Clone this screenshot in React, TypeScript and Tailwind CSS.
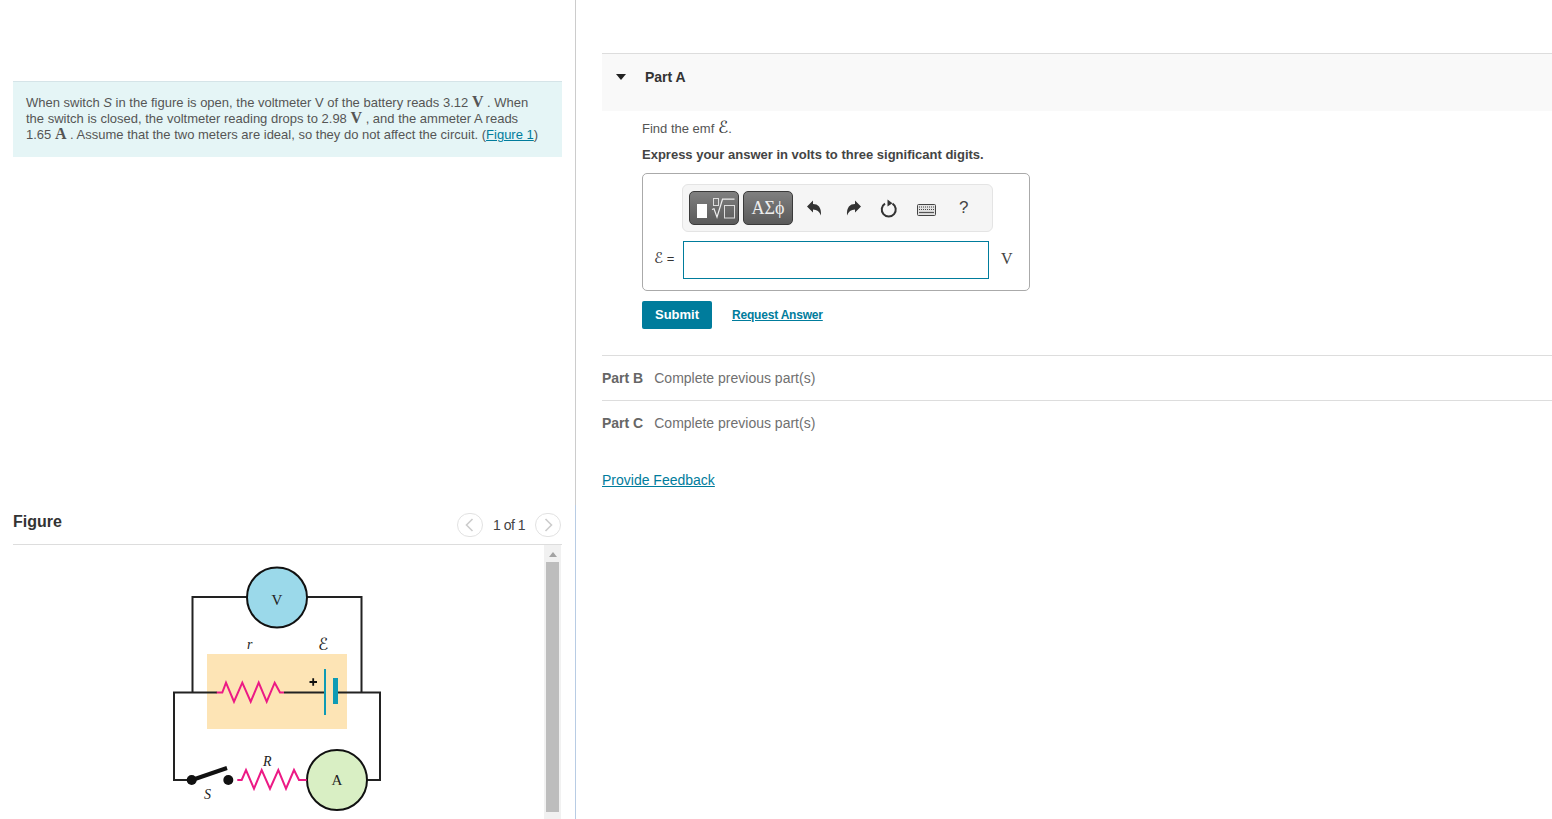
const serif = "font-['Liberation_Serif',serif]";
const script = "font-['DejaVu_Sans',sans-serif] italic";

// Circuit drawing, viewBox uses page coordinates so it's easy to compare with the figure
const Circuit = () => (
  <svg width="250" height="269" viewBox="150 550 250 269" className="block">
    <rect x="207" y="654" width="140" height="75" fill="#fde4b5" />
    <path d="M192.5 692.5V597H361.5V692.5" fill="none" stroke="#222" strokeWidth="2" />
    <path d="M217 692.5H174V780H192M284 692.5H325M338 692.5H380V780H367" fill="none" stroke="#222" strokeWidth="2" />
    <circle cx="277" cy="597.5" r="30" fill="#9bd9ea" stroke="#111" strokeWidth="2" />
    <circle cx="337" cy="780" r="30" fill="#d9efc4" stroke="#111" strokeWidth="2" />
    <polyline
      points="216.7,692.5 222.3,692.5 226,682.7 234,701.7 242.3,682.7 250.7,701.7 258.7,682.7 266.7,701.7 274.7,682.7 280,692.5 284,692.5"
      fill="none"
      stroke="#ec1a85"
      strokeWidth="2"
    />
    <polyline
      points="237.3,780 241.7,780 246,770 254,788.7 261.7,770 270,788.7 278.3,770 286,788.7 294,770 299,780 306.7,780"
      fill="none"
      stroke="#ec1a85"
      strokeWidth="2"
    />
    <rect x="324" y="669" width="2" height="46" fill="#0f9bb5" />
    <rect x="333" y="678" width="5" height="26" fill="#0f9bb5" />
    <path d="M309.5 682H317M313.2 678.2V685.8" stroke="#111" strokeWidth="1.8" />
    <circle cx="191.7" cy="780" r="5" fill="#111" />
    <circle cx="228.3" cy="780" r="5" fill="#111" />
    <path d="M192 780L227 768" stroke="#111" strokeWidth="4" />
    <text x="277" y="605" textAnchor="middle" fontSize="15" fontFamily="Liberation Serif" fill="#222">V</text>
    <text x="337" y="785" textAnchor="middle" fontSize="15" fontFamily="Liberation Serif" fill="#222">A</text>
    <text x="247" y="649" fontSize="14" fontStyle="italic" fontFamily="Liberation Serif" fill="#222">r</text>
    <text x="318" y="650" fontSize="17" fontStyle="italic" fontFamily="DejaVu Sans" fill="#222">ℰ</text>
    <text x="263" y="766" fontSize="14" fontStyle="italic" fontFamily="Liberation Serif" fill="#222">R</text>
    <text x="204" y="799" fontSize="14" fontStyle="italic" fontFamily="Liberation Serif" fill="#222">S</text>
  </svg>
);

const Toolbar = () => (
  <div className="ml-[39px] flex h-[48px] w-[311px] items-center rounded-md border border-[#e4e4e4] bg-[#f5f5f5] pl-[6px]">
    <button className="flex h-[34px] w-[50px] items-center justify-center rounded-[5px] border border-[#3a3a3a] bg-gradient-to-b from-[#808080] to-[#5a5a5a]">
      <svg width="48" height="32" viewBox="0 0 48 32">
        <rect x="7" y="12" width="10" height="14" fill="#fff" />
        <rect x="23.5" y="6.5" width="5" height="7" fill="none" stroke="#ddd" />
        <path d="M22 17.5l2 -0.8 3 8.5 5.5 -18h12" fill="none" stroke="#eee" strokeWidth="1.2" />
        <rect x="34.5" y="13.5" width="10" height="12.5" fill="none" stroke="#ddd" />
      </svg>
    </button>
    <button className={`${serif} ml-[4px] flex h-[34px] w-[50px] items-center justify-center rounded-[5px] border border-[#3a3a3a] bg-gradient-to-b from-[#808080] to-[#5a5a5a] text-[18px] text-[#eee]`}>
      ΑΣϕ
    </button>
    <svg className="ml-[14px]" width="15" height="16" viewBox="0 0 15 16">
      <path d="M0 6.5L6 0.5V4C11 4 14.5 7 14 15.5C12.5 11.5 10 9.5 6 9.5V12.5Z" fill="#333" />
    </svg>
    <svg className="ml-[24px]" width="15" height="16" viewBox="0 0 15 16">
      <path d="M15 6.5L9 0.5V4C4 4 0.5 7 1 15.5C2.5 11.5 5 9.5 9 9.5V12.5Z" fill="#333" />
    </svg>
    <svg className="ml-[19px] mt-[2px]" width="18" height="20" viewBox="0 0 18 20">
      <path d="M12.5 4.6A7 7 0 1 1 5 4.6" fill="none" stroke="#333" strokeWidth="2" />
      <path d="M7.5 0.5L12.5 4.2L7.5 7.5Z" fill="#333" />
    </svg>
    <svg className="ml-[19px] mt-[4px]" width="19" height="12" viewBox="0 0 19 12">
      <rect x="0.5" y="0.5" width="18" height="11" rx="1" fill="#e2e2e2" stroke="#444" />
      <path d="M2 3h15M2 5.5h15" stroke="#444" strokeDasharray="1 1" />
      <path d="M2 8.5h15" stroke="#555" strokeWidth="1.2" />
    </svg>
    <span className="ml-[23px] text-[17px] text-[#444]">?</span>
  </div>
);

const LockedPart = ({ name, border }: { name: string; border: boolean }) => (
  <div className={`flex h-[45px] items-center text-[14px] ${border ? "border-t border-[#ddd]" : ""}`}>
    <span className="font-bold text-[#666]">{name}</span>
    <span className="ml-[11px] text-[#707070]">Complete previous part(s)</span>
  </div>
);

export default function App() {
  return (
    <div className="flex h-[819px] w-[1552px] overflow-hidden bg-white font-['Liberation_Sans',sans-serif]">
      <div className="relative h-full w-[576px] shrink-0 border-r border-[#ccc]">
        <div className="absolute bottom-0 right-[-1px] top-[505px] w-px bg-[#b8cce4]" />
        <div className="ml-[13px] mr-[13px] mt-[81px] h-[76px] w-[549px] border-t border-[#d5e4e8] bg-[#e5f5f6] px-[13px] pt-[13px] text-[13px] leading-[16px] text-[#555]">
          When switch <i>S</i> in the figure is open, the voltmeter V of the battery reads 3.12{" "}
          <b className={`${serif} text-[16px] leading-[10px]`}>V</b> . When
          <br />
          the switch is closed, the voltmeter reading drops to 2.98{" "}
          <b className={`${serif} text-[16px] leading-[10px]`}>V</b> , and the ammeter A reads
          <br />
          1.65 <b className={`${serif} text-[16px] leading-[10px]`}>A</b> . Assume that the two meters are ideal, so they do not affect the circuit. (
          <a className="text-[#007c9c] underline">Figure 1</a>)
        </div>

        <div className="mx-[13px] mt-[348px] flex h-[40px] w-[549px] items-start justify-between border-b border-[#ddd]">
          <h2 className="mt-[7px] text-[16px] font-bold leading-[20px] text-[#333]">Figure</h2>
          <div className="mr-[1px] mt-[8px] flex items-center text-[14px] text-[#444]">
            <span className="flex h-[24px] w-[26px] items-center justify-center rounded-full border border-[#e2e2e2]">
              <svg width="9" height="14" viewBox="0 0 9 14"><path d="M7.5 1L1.5 7L7.5 13" fill="none" stroke="#ccc" strokeWidth="1.6" /></svg>
            </span>
            <span className="mx-[10px] tracking-[-0.5px]">1 of 1</span>
            <span className="flex h-[24px] w-[26px] items-center justify-center rounded-full border border-[#e2e2e2]">
              <svg width="9" height="14" viewBox="0 0 9 14"><path d="M1.5 1L7.5 7L1.5 13" fill="none" stroke="#ccc" strokeWidth="1.6" /></svg>
            </span>
          </div>
        </div>

        <div className="mx-[13px] flex h-[274px] w-[548px] justify-between overflow-hidden">
          <div className="ml-[137px] mt-[5px]">
            <Circuit />
          </div>
          <div className="flex w-[17px] flex-col items-center bg-[#f1f1f1]">
            <div className="mt-[7px] h-0 w-0 border-x-[4px] border-b-[5px] border-x-transparent border-b-[#a3a3a3]" />
            <div className="mt-[5px] h-[250px] w-[13px] bg-[#bdbdbd]" />
          </div>
        </div>
      </div>

      <div className="ml-[26px] flex-1">
        <div className="mt-[53px] flex h-[58px] items-start border-t border-[#ddd] bg-[#f9f9f9]">
          <div className="ml-[14px] mt-[20px] h-0 w-0 border-x-[5.5px] border-t-[6px] border-x-transparent border-t-[#222]" />
          <span className="ml-[19px] mt-[15px] text-[14px] font-bold leading-[17px] text-[#333]">Part A</span>
        </div>

        <div className="pl-[40px]">
          <p className="mt-[9px] h-[18px] text-[13px] leading-[18px] text-[#555]">
            Find the emf <span className={`${script} text-[17px] leading-[10px] text-[#333]`}>ℰ</span>.
          </p>
          <p className="mt-[8px] text-[13px] font-bold leading-[18px] text-[#444]">
            Express your answer in volts to three significant digits.
          </p>

          <div className="mt-[9px] h-[118px] w-[388px] rounded-[5px] border border-[#aaa] pt-[10px]">
            <Toolbar />
            <div className="mt-[9px] flex items-center">
              <span className="mb-[2px] ml-[11px] w-[29px] text-[13px] leading-[18px] text-[#333]">
                <span className={`${script} text-[15px] leading-[10px]`}>ℰ</span> =
              </span>
              <input className="h-[38px] w-[306px] border border-[#007c9c] bg-white" />
              <span className={`${serif} ml-[12px] mb-[2px] text-[16px] text-[#444]`}>V</span>
            </div>
          </div>

          <div className="mt-[10px] flex items-center">
            <button className="h-[28px] w-[70px] rounded-[2px] bg-[#007c9c] text-[13px] font-bold text-white">Submit</button>
            <a className="ml-[20px] text-[12px] font-bold tracking-[-0.2px] text-[#007c9c] underline">Request Answer</a>
          </div>
        </div>

        <div className="mt-[26px]">
          <LockedPart name="Part B" border />
          <LockedPart name="Part C" border />
        </div>

        <a className="mt-[26px] block text-[14px] leading-[18px] text-[#007c9c] underline">Provide Feedback</a>
      </div>
    </div>
  );
}
